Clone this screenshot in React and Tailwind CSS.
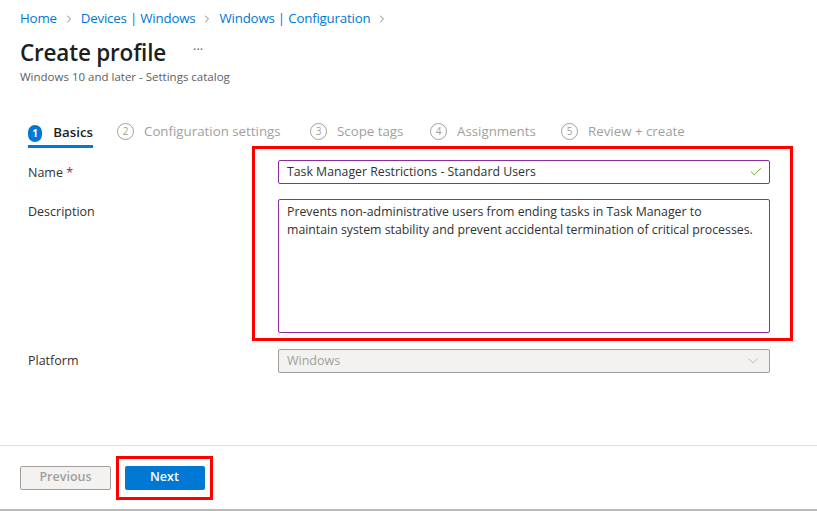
import { Check, ChevronDown, ChevronRight } from "lucide-react";

const font = { fontFamily: '"Open Sans", "Noto Sans", sans-serif' };

const steps = [
  { n: 2, label: "Configuration settings", w: "w-[193px]" },
  { n: 3, label: "Scope tags", w: "w-[120px]" },
  { n: 4, label: "Assignments", w: "w-[131px]" },
  { n: 5, label: "Review + create", w: "w-[130px]" },
];

export default function App() {
  return (
    <div className="w-[817px] h-[511px] bg-white flex flex-col overflow-hidden text-[#323130]" style={font}>
      {/* Breadcrumb */}
      <div className="flex items-center pl-5 pt-[9px] h-[29px] text-[13.3px] text-[#0078d4] tracking-[-0.2px]">
        <span>Home</span>
        <ChevronRight size={12} className="text-[#605e5c] mx-[6px]" strokeWidth={1.5} />
        <span>Devices | Windows</span>
        <ChevronRight size={12} className="text-[#605e5c] mx-[6px]" strokeWidth={1.5} />
        <span>Windows | Configuration</span>
        <ChevronRight size={12} className="text-[#605e5c] mx-[6px]" strokeWidth={1.5} />
      </div>

      {/* Title */}
      <div className="flex items-center pl-5 mt-[8px] h-[32px]">
        <h1 className="text-[22.5px] font-semibold text-[#201f1e] tracking-[-0.2px]">Create profile</h1>
        <span className="ml-[27px] text-[#605e5c] text-[13px] -mt-[6px]">···</span>
      </div>
      <div className="pl-5 text-[11.5px] text-[#605e5c] -mt-[1px]">Windows 10 and later - Settings catalog</div>

      {/* Tabs */}
      <div className="flex items-center pl-[28px] mt-[33px] h-[30px]">
        <div className="flex items-center h-full border-b-[3px] border-[#0078d4] w-[65px] pt-[3px]">
          <span className="w-[17px] h-[17px] rounded-full bg-[#0078d4] text-white text-[10px] font-bold flex items-center justify-center">1</span>
          <span className="ml-[11px] text-[13.3px] font-semibold text-[#201f1e]">Basics</span>
        </div>
        <div className="w-[24px]" />
        {steps.map((s) => (
          <div key={s.n} className={`flex items-center h-full pb-[3px] ${s.w}`}>
            <span className="w-[17px] h-[17px] rounded-full border border-[#a19f9d] text-[#a19f9d] text-[10px] flex items-center justify-center">{s.n}</span>
            <span className="ml-[10px] text-[13.3px] text-[#a19f9d] whitespace-nowrap">{s.label}</span>
          </div>
        ))}
      </div>

      {/* Form */}
      <div className="flex mt-[-2px]">
        <div className="w-[252px] pl-[28px] text-[12.5px] text-[#323130]">
          <div className="mt-[18px] h-[20px]">Name <span className="text-[#a4262c]">*</span></div>
          <div className="mt-[19px]">Description</div>
        </div>
        <div className="w-[541px] h-[195px] border-[3px] border-[#ff0000] pl-[23px] pr-[20px] pt-[11px]">
          <div className="h-[24px] border border-[#8a2da5] rounded-[2px] flex items-center justify-between pl-[8px] pr-[6px] text-[12.3px] text-[#323130]">
            <span>Task Manager Restrictions - Standard Users</span>
            <Check size={14} className="text-[#57a300]" strokeWidth={1.5} />
          </div>
          <div className="mt-[15px] h-[134px] border border-[#8a2da5] rounded-[2px] px-[8px] pt-[3px] text-[12.3px] leading-[18px] text-[#323130]">
            Prevents non-administrative users from ending tasks in Task Manager to
            <br />
            maintain system stability and prevent accidental termination of critical processes.
          </div>
        </div>
      </div>

      <div className="flex items-center mt-[8px]">
        <div className="w-[278px] pl-[28px] text-[12.5px]">Platform</div>
        <div className="w-[492px] h-[24px] bg-[#f3f2f1] border border-[#a19f9d] rounded-[2px] flex items-center justify-between pl-[8px] pr-[8px] text-[12.5px] text-[#a19f9d]">
          <span>Windows</span>
          <ChevronDown size={16} strokeWidth={1} className="text-[#a19f9d]" />
        </div>
      </div>

      <div className="flex-1" />

      {/* Footer */}
      <div className="border-t border-[#e1dfdd] h-[64px] flex items-center pl-5">
        <button className="w-[91px] h-[24px] bg-[#f3f2f1] border border-[#a19f9d] rounded-[2px] text-[12.5px] font-semibold text-[#a19f9d]">
          Previous
        </button>
        <div className="ml-[5px] w-[97px] h-[44px] border-[3px] border-[#ff0000] flex items-center justify-center">
          <button className="w-[80px] h-[24px] bg-[#0078d4] rounded-[2px] text-[12.5px] font-semibold text-white">
            Next
          </button>
        </div>
      </div>
      <div className="h-[2px] bg-[#b8bcb8]" />
    </div>
  );
}
